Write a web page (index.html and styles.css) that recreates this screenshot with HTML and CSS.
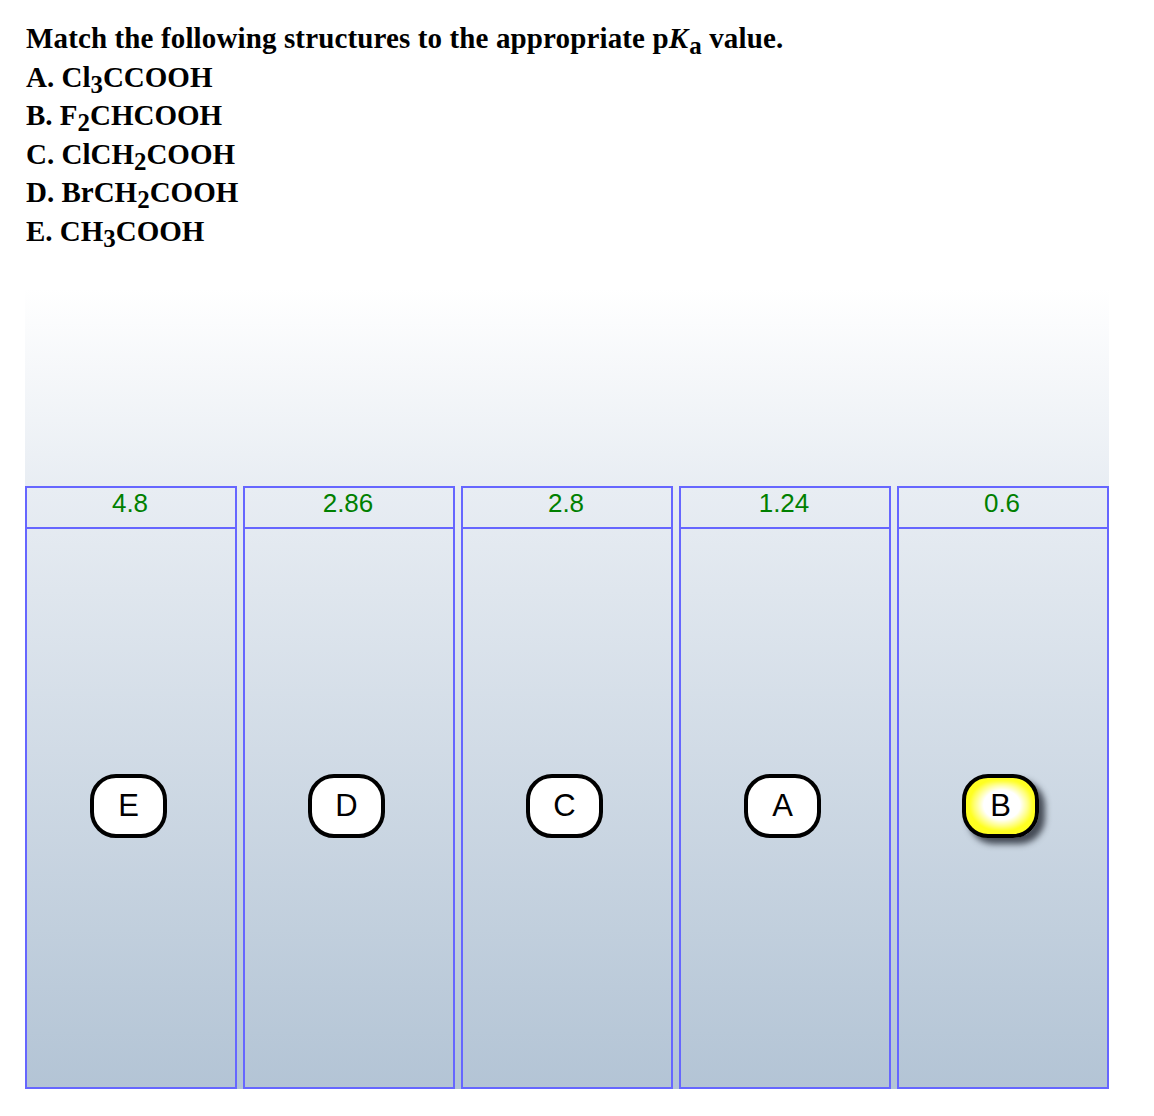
FILE: index.html
```html
<!DOCTYPE html>
<html>
<head>
<meta charset="utf-8">
<link rel="stylesheet" href="styles.css">
</head>
<body>
<div class="question">
  <div class="line title">Match the following structures to the appropriate p<i>K</i><sub>a</sub> value.</div>
  <div class="line">A. Cl<sub>3</sub>CCOOH</div>
  <div class="line">B. F<sub>2</sub>CHCOOH</div>
  <div class="line">C. ClCH<sub>2</sub>COOH</div>
  <div class="line">D. BrCH<sub>2</sub>COOH</div>
  <div class="line">E. CH<sub>3</sub>COOH</div>
</div>
<div class="board">
  <div class="col"><div class="head">4.8</div><div class="body"><div class="chip">E</div></div></div>
  <div class="col"><div class="head">2.86</div><div class="body"><div class="chip">D</div></div></div>
  <div class="col"><div class="head">2.8</div><div class="body"><div class="chip">C</div></div></div>
  <div class="col"><div class="head">1.24</div><div class="body"><div class="chip">A</div></div></div>
  <div class="col"><div class="head">0.6</div><div class="body"><div class="chip active">B</div></div></div>
</div>
</body>
</html>
```
FILE: styles.css
```css
html, body {
  margin: 0;
  padding: 0;
  background: #ffffff;
}
body {
  padding: 19px 0 0 26px;
}
.question {
  font-family: "Liberation Serif", "Times New Roman", serif;
  font-weight: bold;
  font-size: 29px;
  color: #000;
}
.line {
  height: 38.5px;
  line-height: 38.5px;
  white-space: nowrap;
}
.line sub {
  font-size: 0.86em;
  line-height: 0;
  vertical-align: -0.26em;
}
.title {
  letter-spacing: 0.13px;
}
.title i {
  font-style: italic;
  margin-right: 1px;
}
.board {
  margin-top: 38px;
  margin-left: -1px;
  width: 1084px;
  padding-top: 198px;
  display: flex;
  gap: 6px;
  background: linear-gradient(to bottom, #ffffff 0%, #e8edf3 25%, #b3c4d5 100%);
}
.col {
  width: 212px;
  height: 603px;
  box-sizing: border-box;
  border: 2px solid #6666ff;
  display: flex;
  flex-direction: column;
}
.head {
  height: 39px;
  border-bottom: 2px solid #6666ff;
  text-align: center;
  font-family: "Liberation Sans", Arial, sans-serif;
  font-size: 26px;
  color: #008000;
  line-height: 30px;
  padding-right: 2px;
}
.body {
  flex: 1;
  display: flex;
  align-items: center;
  justify-content: center;
}
.chip {
  width: 69px;
  height: 56px;
  border: 4px solid #000;
  border-radius: 26px;
  background: #fff;
  margin: 0 5px 5px 0;
  display: flex;
  align-items: center;
  justify-content: center;
  font-family: "Liberation Sans", Arial, sans-serif;
  font-size: 31px;
  color: #000;
}
.chip.active {
  background: radial-gradient(ellipse closest-side at 52% 48%, #ffffff 55%, #ffff22 100%);
  box-shadow: inset 0 0 4px 3px #ffff22, 6px 6px 6px rgba(35, 40, 50, 0.8);
}
```
